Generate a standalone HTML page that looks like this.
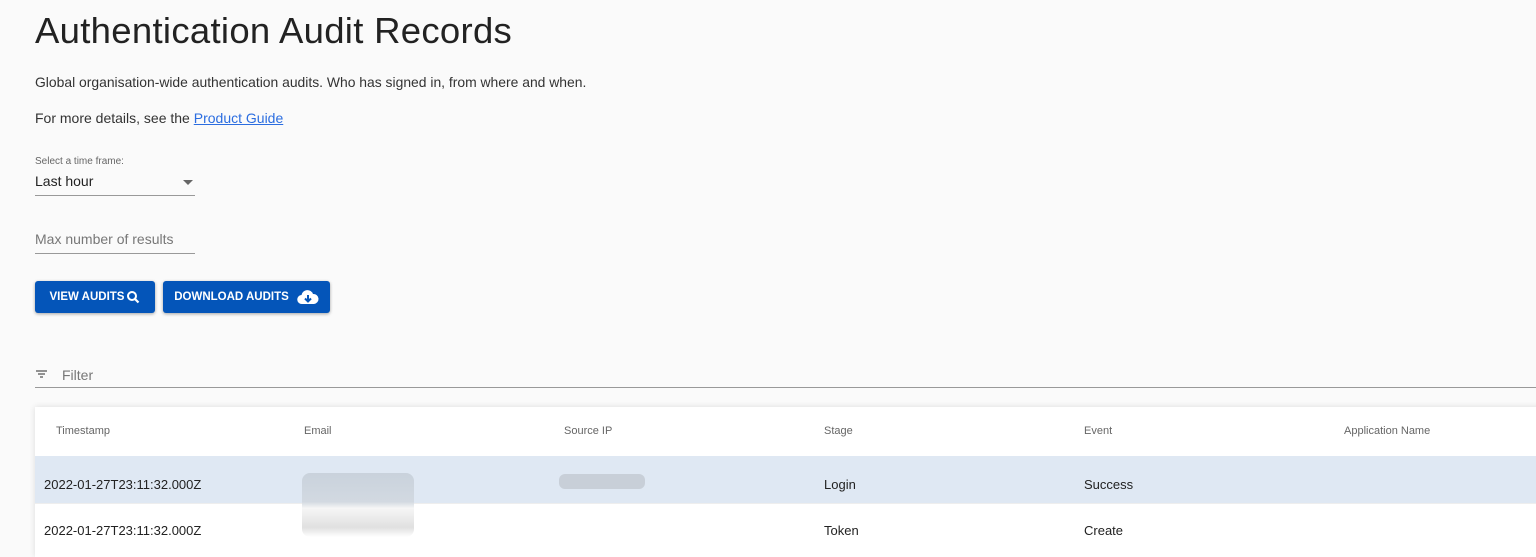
<!DOCTYPE html>
<html><head><style>
body{margin:0;width:1536px;height:550px;overflow:hidden;background:#fafafa;font-family:"Liberation Sans",sans-serif;color:#333;position:relative}
.a{position:absolute;white-space:nowrap}
h1{position:absolute;left:35px;top:10px;margin:0;font-weight:400;font-size:36.5px;color:#222;letter-spacing:0.3px}
.p{font-size:14px;color:#333}
.btn{position:absolute;top:281px;height:32px;background:#0455b9;color:#fff;font-size:11.5px;font-weight:bold;border-radius:3px;box-shadow:0 1px 3px rgba(0,0,0,.35);display:flex;align-items:center;justify-content:center}
.card{position:absolute;left:35px;top:407px;width:1520px;height:150px;background:#fff;box-shadow:0 0 6px rgba(0,0,0,.12)}
.th{font-size:11px;color:#666;top:18px}
.td{font-size:13px;color:#222}
.blur{position:absolute;border-radius:8px}
</style></head><body>
<h1>Authentication Audit Records</h1>
<div class="a p" style="left:35px;top:74px;font-size:13.9px">Global organisation-wide authentication audits. Who has signed in, from where and when.</div>
<div class="a p" style="left:35px;top:110px">For more details, see the <span style="color:#2b6de0;text-decoration:underline">Product Guide</span></div>
<div class="a" style="left:35px;top:156px;font-size:10px;color:#666">Select a time frame:</div>
<div class="a" style="left:35px;top:173px;font-size:14px;color:#222">Last hour</div>
<div class="a" style="left:183px;top:180px;width:0;height:0;border-left:5px solid transparent;border-right:5px solid transparent;border-top:5px solid #666"></div>
<div class="a" style="left:35px;top:195px;width:160px;height:1px;background:#999"></div>
<div class="a" style="left:35px;top:231px;font-size:14px;color:#777">Max number of results</div>
<div class="a" style="left:35px;top:253px;width:160px;height:1px;background:#999"></div>
<div class="btn" style="left:35px;width:120px">VIEW AUDITS<svg width="14" height="14" viewBox="0 0 14 14" style="margin-left:2px"><circle cx="6" cy="6" r="4" fill="none" stroke="#fff" stroke-width="2"/><path d="M9 9l3.5 3.5" stroke="#fff" stroke-width="2.2"/></svg></div>
<div class="btn" style="left:163px;width:167px">DOWNLOAD AUDITS<svg width="22" height="16" viewBox="0 0 22 16" style="margin-left:8px"><path d="M5 15a4.5 4.5 0 0 1-.5-9A6 6 0 0 1 16 5a5 5 0 0 1 1 10z" fill="#fff"/><path d="M11 6v6M8 9.5l3 3 3-3" stroke="#0455b9" stroke-width="2" fill="none"/></svg></div>
<svg class="a" style="left:36px;top:370px" width="11" height="8"><path d="M0 1h11M2 4h7M4 7h3" stroke="#555" stroke-width="1.3"/></svg>
<div class="a" style="left:62px;top:367px;font-size:14px;color:#777">Filter</div>
<div class="a" style="left:35px;top:387px;width:1501px;height:1px;background:#999"></div>
<div class="card">
<div class="a th" style="left:21px">Timestamp</div>
<div class="a th" style="left:269px">Email</div>
<div class="a th" style="left:529px">Source IP</div>
<div class="a th" style="left:789px">Stage</div>
<div class="a th" style="left:1049px">Event</div>
<div class="a th" style="left:1309px">Application Name</div>
<div class="a" style="left:0;top:49px;width:1520px;height:47px;background:#dfe8f3"></div>
<div class="a" style="left:0;top:96px;width:1520px;height:1px;background:#eee"></div>
<div class="a td" style="left:9px;top:70px">2022-01-27T23:11:32.000Z</div>
<div class="a td" style="left:9px;top:116px">2022-01-27T23:11:32.000Z</div>
<div class="blur" style="left:267px;top:66px;width:112px;height:64px;background:linear-gradient(#c9d2dc 0,#d2d9e1 45%,#f6f6f6 55%,#e0e0e0 85%,#fff 100%)"></div>
<div class="blur" style="left:524px;top:67px;width:86px;height:15px;background:#c8cfd8;border-radius:6px"></div>
<div class="a td" style="left:789px;top:70px">Login</div>
<div class="a td" style="left:789px;top:116px">Token</div>
<div class="a td" style="left:1049px;top:70px">Success</div>
<div class="a td" style="left:1049px;top:116px">Create</div>
</div>
</body></html>
